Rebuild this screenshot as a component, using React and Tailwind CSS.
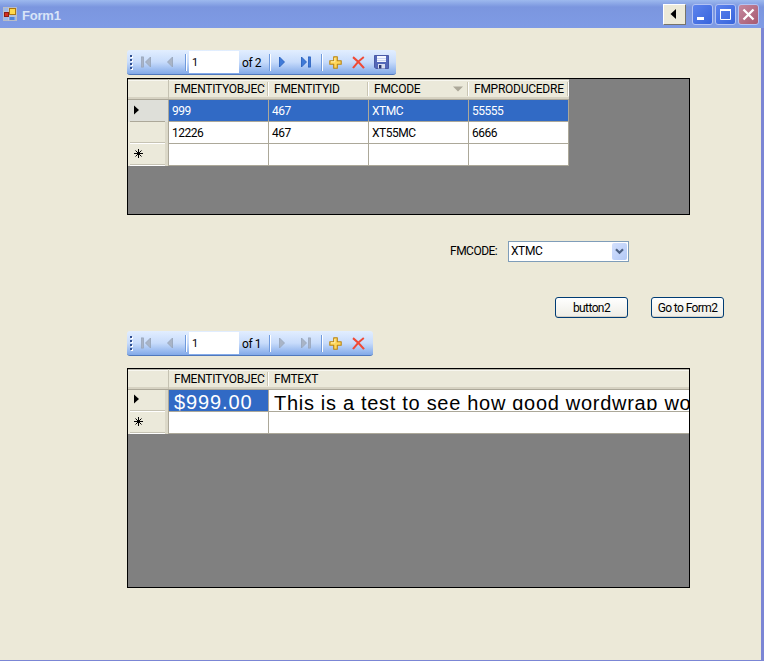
import React from "react";

const Arrow = ({ kind, disabled }) => {
  const fill = disabled ? "#a9b4c6" : "#3f7ad8";
  const stroke = disabled ? "#96a3b8" : "#2159b8";
  const flip = kind === "first" || kind === "prev";
  const bar = kind === "first" || kind === "last";
  return (
    <svg width="12" height="12" viewBox="0 0 12 12" className={flip ? "-scale-x-100" : ""}>
      <path
        d={bar ? "M1.5 1L6.5 6L1.5 11Z" : "M3.5 1L8.5 6L3.5 11Z"}
        fill={fill}
        stroke={stroke}
        strokeWidth="0.8"
      />
      {bar && <rect x="8.4" y="0.9" width="2.2" height="10.2" fill={fill} stroke={stroke} strokeWidth="0.7" />}
    </svg>
  );
};

const PlusIcon = () => (
  <svg width="13" height="13" viewBox="0 0 13 13">
    <path
      d="M4.7 0.8H8.3V4.7H12.2V8.3H8.3V12.2H4.7V8.3H0.8V4.7H4.7Z"
      fill="#ffd65a"
      stroke="#b98517"
      strokeWidth="1.1"
      strokeLinejoin="round"
    />
    <path d="M5.8 2V5.8H2" stroke="#fff0ae" fill="none" />
  </svg>
);

const DeleteIcon = () => (
  <svg width="13" height="13" viewBox="0 0 13 13">
    <path d="M1 1.2C4 3.5 8.5 8 12 12.2M11.8 1C7.5 4 3.5 8.5 1 12" stroke="#f04a36" strokeWidth="2.1" fill="none" />
  </svg>
);

const SaveIcon = () => (
  <svg width="15" height="14" viewBox="0 0 15 14">
    <path d="M0.5 0.5H14.5V13.5H1.8L0.5 12.2Z" fill="#5468b8" stroke="#4a5aa6" />
    <rect x="3" y="1" width="9" height="6" fill="#f4f7ff" />
    <path d="M3 3.5H12M3 5.5H12" stroke="#cbd6f1" />
    <rect x="4" y="9" width="7" height="4.5" fill="#d8def0" />
    <rect x="5" y="10" width="2.4" height="3.5" fill="#2c3870" />
  </svg>
);

const Separator = () => (
  <span className="h-[17px] w-[2px] shrink-0 border-r border-white bg-[#6f9add]" />
);

const Navigator = ({ total, active, save }) => (
  <div
    className={`flex h-[25px] items-center rounded-[3px] border-b border-[#4f78bd] bg-linear-to-b from-[#e2eeff] via-[#c8dcfb] to-[#82a9e8] ${
      save ? "w-[269px]" : "w-[246px]"
    }`}
  >
    <span className="ml-[3px] flex w-[3px] flex-col gap-[2px]">
      {[0, 1, 2, 3].map((i) => (
        <span key={i} className="size-[2px] bg-[#304f91] shadow-[1px_1px_0_#ffffff]" />
      ))}
    </span>
    <span className="ml-[7px]"><Arrow kind="first" disabled /></span>
    <span className="ml-[12px]"><Arrow kind="prev" disabled /></span>
    <span className="ml-[9px] flex"><Separator /></span>
    <span className="ml-[2px] h-[22px] w-[50px] bg-white pl-[3px] text-[11px] leading-[23px]">1</span>
    <span className="ml-[3px] w-[27px] whitespace-nowrap pt-px text-[12px]">of {total}</span>
    <Separator />
    <span className="ml-[5px]"><Arrow kind="next" disabled={!active} /></span>
    <span className="ml-[12px]"><Arrow kind="last" disabled={!active} /></span>
    <span className="ml-[9px] flex"><Separator /></span>
    <span className="ml-[6px]"><PlusIcon /></span>
    <span className="ml-[10px]"><DeleteIcon /></span>
    {save && <span className="ml-[9px]"><SaveIcon /></span>}
  </div>
);

const HeaderCell = ({ text, className = "w-[100px]", sorted }) => (
  <div className={`flex h-full shrink-0 items-center pl-[5px] ${className}`}>
    <span className="flex-1 overflow-hidden whitespace-nowrap tracking-[-0.25px]">{text}</span>
    {sorted && (
      <svg width="10" height="6" viewBox="0 0 10 6" className="mr-[2px]">
        <path d="M0 0.5H10L5 5.5Z" fill="#aca899" />
      </svg>
    )}
    <span className="ml-[2px] h-[14px] w-[2px] border-r border-white bg-[#c9c5b3]" />
  </div>
);

const HeaderRow = ({ children }) => (
  <div className="flex h-[21px] border-b border-[#aca899] bg-[#ebe9da] shadow-[inset_0_1px_0_#b5b3a8,inset_0_2px_0_#f8f7f0,inset_0_-2px_0_#d6d2c2]">
    <div className="w-[41px] shrink-0 border-r border-[#c5c2b2]" />
    {children}
  </div>
);

const RowHeader = ({ mark, pressed }) => (
  <div
    className={`w-[41px] shrink-0 border-r border-[#aca899] pl-[2px] ${
      pressed ? "bg-[#dedfd9]" : "bg-[#ebe9da] shadow-[inset_-3px_0_0_#dcd9c9]"
    }`}
  >
    <div
      className={`flex w-[35px] items-center border-b pl-[3px] ${
        pressed ? "h-[22px] border-[#aca899]" : "h-[21px] border-[#c6c3b4] shadow-[0_1px_0_#ffffff]"
      }`}
    >
      {mark === "current" && (
        <svg width="6" height="10" viewBox="0 0 6 10" className="mb-[2px] ml-px">
          <path d="M0 0.5V9.5L5 5Z" fill="#000" />
        </svg>
      )}
      {mark === "new" && (
        <svg width="10" height="10" viewBox="0 0 10 10" className="ml-px">
          <path d="M4.5 0V9M0 4.5H9M1.5 1.5L7.5 7.5M7.5 1.5L1.5 7.5" stroke="#000" strokeWidth="1" />
        </svg>
      )}
    </div>
  </div>
);

const Cell = ({ text, selected }) => (
  <div
    className={`w-[100px] shrink-0 border-r border-b border-[#aca899] pl-[3px] leading-[23px] tracking-[-0.5px] ${
      selected ? "bg-[#316ac5] text-white" : "bg-white"
    }`}
  >
    {text}
  </div>
);

const rows = [
  { mark: "current", cells: ["999", "467", "XTMC", "55555"] },
  { mark: "", cells: ["12226", "467", "XT55MC", "6666"] },
  { mark: "new", cells: ["", "", "", ""] },
];

const FormButton = ({ children }) => (
  <button className="h-[21px] w-[73px] whitespace-nowrap rounded-[3px] border border-[#003c74] bg-linear-to-b from-white to-[#eeede5] text-center leading-[20px] tracking-[-0.6px] shadow-[inset_0_-1px_0_#d6d0c5]">
    {children}
  </button>
);

const TitleButton = ({ children, close }) => (
  <span
    className={`flex size-[21px] items-center justify-center rounded-[3px] border border-[#b3c3f4] ${
      close ? "bg-linear-to-br from-[#c5889f] to-[#a65970]" : "bg-linear-to-br from-[#5d83ed] to-[#3764dc]"
    }`}
  >
    {children}
  </span>
);

const TitleBar = () => (
  <div className="flex h-[28px] items-center bg-linear-to-b from-[#9db9ee] via-[#7b96df] via-25% to-[#7f9be5] pl-[3px]">
    <svg width="14" height="14" viewBox="0 0 14 14">
      <rect x="0.5" y="0.5" width="13" height="13" fill="#9fb9e8" stroke="#b9bdc7" />
      <path d="M0.5 5H6M5.5 0.5V13.5M5 9H13.5" stroke="#c5c9d2" />
      <rect x="1.5" y="5.5" width="4" height="4" fill="#d32e20" stroke="#8d1c13" />
      <rect x="6.5" y="1.5" width="6" height="6" fill="#ffd94c" stroke="#ac7712" />
      <rect x="6.5" y="10" width="5" height="3" fill="#4c83d8" />
    </svg>
    <span className="ml-[5px] flex-1 pt-[3px] font-['Liberation_Sans'] text-[13px] font-bold tracking-[-0.2px] text-[#d8e4f8]">Form1</span>
    <span className="flex h-[21px] w-[23px] items-center justify-center border border-t-white border-l-white border-r-[#77746a] border-b-[#77746a] bg-[#ece9d8]">
      <svg width="6" height="10" viewBox="0 0 6 10" className="mr-[3px] mb-px">
        <path d="M6 0V10L0.5 5Z" fill="#000" />
      </svg>
    </span>
    <span className="mr-[5px] ml-[6px] flex gap-[2px]">
      <TitleButton>
        <svg width="15" height="15" viewBox="0 0 15 15"><rect x="2" y="10" width="7" height="3" fill="#fff" /></svg>
      </TitleButton>
      <TitleButton>
        <svg width="15" height="15" viewBox="0 0 15 15">
          <path d="M2.5 3H12.5V12.5H2.5Z" fill="none" stroke="#fff" />
          <path d="M2 3H13" stroke="#fff" strokeWidth="2" />
        </svg>
      </TitleButton>
      <TitleButton close>
        <svg width="15" height="15" viewBox="0 0 15 15">
          <path d="M2.5 2.5L12.5 12.5M12.5 2.5L2.5 12.5" stroke="#fff" strokeWidth="2.3" />
        </svg>
      </TitleButton>
    </span>
  </div>
);

const App = () => {
  return (
    <div className="h-[661px] w-[764px] overflow-hidden bg-[#ece9d8] font-['Roboto','Liberation_Sans',sans-serif] text-[12px] tracking-[-0.4px] text-black">
      <TitleBar />
      <div className="h-[633px] border-r-[3px] border-b border-[#7b86d5] pl-[127px]">
        <div className="pt-[22px]"><Navigator total={2} active save /></div>

        <div className="mt-[3px] h-[137px] w-[563px] overflow-hidden border border-black bg-[#808080]">
          <div className="w-[441px]">
            <HeaderRow>
              <HeaderCell text="FMENTITYOBJECT" />
              <HeaderCell text="FMENTITYID" />
              <HeaderCell text="FMCODE" sorted />
              <HeaderCell text="FMPRODUCEDRE" />
            </HeaderRow>
            {rows.map((row, i) => (
              <div key={i} className="flex h-[22px]">
                <RowHeader mark={row.mark} pressed={i === 0} />
                {row.cells.map((text, j) => (
                  <Cell key={j} text={text} selected={i === 0} />
                ))}
              </div>
            ))}
          </div>
        </div>

        <div className="mt-[26px] ml-[323px] flex h-[21px] items-center">
          <span className="w-[58px] pb-[2px] tracking-[-0.5px]">FMCODE:</span>
          <div className="flex h-[21px] w-[121px] items-center justify-between border border-[#7f9db9] bg-white pr-px pl-[2px]">
            <span className="pb-px">XTMC</span>
            <span className="flex h-[17px] w-[15px] items-center justify-center rounded-[2px] bg-linear-to-br from-[#d3e0fd] to-[#b3c9f6]">
              <svg width="9" height="7" viewBox="0 0 9 7">
                <path d="M1 1.2L4.5 4.7L8 1.2" fill="none" stroke="#4d6185" strokeWidth="2.2" />
              </svg>
            </span>
          </div>
        </div>

        <div className="mt-[35px] ml-[428px] flex gap-[23px]">
          <FormButton>button2</FormButton>
          <FormButton>Go to Form2</FormButton>
        </div>

        <div className="mt-[13px]"><Navigator total={1} /></div>

        <div className="mt-[12px] h-[220px] w-[563px] overflow-hidden border border-black bg-[#808080]">
          <HeaderRow>
            <HeaderCell text="FMENTITYOBJECT" />
            <HeaderCell text="FMTEXT" className="w-[500px]" />
          </HeaderRow>
          <div className="flex h-[22px] font-['Liberation_Sans']">
            <RowHeader mark="current" />
            <div className="w-[100px] shrink-0 overflow-hidden border-r border-b border-[#aca899] bg-[#316ac5] pl-[5px] text-[20px] leading-[24px] tracking-[0.9px] text-white">
              $999.00
            </div>
            <div className="flex-1 overflow-hidden border-b border-[#aca899] bg-white pl-[5px]">
              <div className="h-[20px] overflow-hidden whitespace-nowrap text-[20px] leading-[27px] tracking-[0.7px]">
                This is a test to see how good wordwrap wo
              </div>
            </div>
          </div>
          <div className="flex h-[22px]">
            <RowHeader mark="new" />
            <Cell text="" />
            <div className="flex-1 border-b border-[#aca899] bg-white" />
          </div>
        </div>
      </div>
    </div>
  );
};

export default App;
